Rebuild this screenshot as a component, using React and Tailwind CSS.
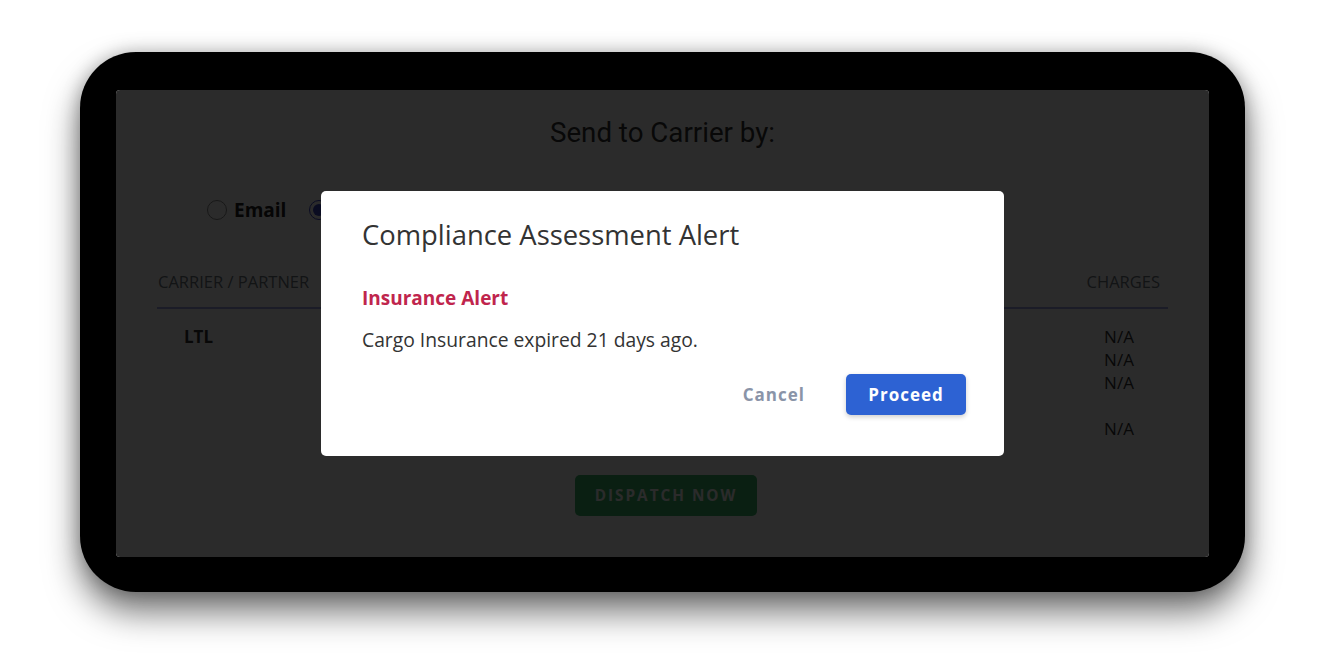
import React from "react";

function Radio({ label, checked }) {
  return (
    <div className="flex items-center gap-[7px] w-[102px] shrink-0">
      <span
        className={
          "w-[20px] h-[20px] rounded-full border-[1.5px] flex items-center justify-center shrink-0 " +
          (checked ? "border-[#3b46c4]" : "border-[#8a8a8a]")
        }
      >
        {checked ? <span className="w-[12px] h-[12px] rounded-full bg-[#3b46c4]" /> : null}
      </span>
      {label ? <span className="text-[19px] leading-[28px] font-bold text-[#222]">{label}</span> : <span className="h-[28px]" />}
    </div>
  );
}

export default function App() {
  return (
    <div
      className="w-[1326px] h-[664px] bg-white pl-[80px] pt-[52px]"
      style={{ fontFamily: '"Open Sans", "Noto Sans", sans-serif' }}
    >
      <div className="w-[1165px] h-[540px] rounded-[56px] bg-black pt-[38px] pb-[35px] px-[36px] shadow-[0_20px_34px_rgba(0,0,0,0.55),0_0_18px_rgba(0,0,0,0.25)]">
        <div className="relative h-full rounded-[4px] bg-white overflow-hidden">
          {/* underlying page */}
          <div className="flex flex-col pt-[27px] px-[41px]">
            <div
              className="text-center text-[27.7px] leading-[32px] text-[#333]"
              style={{ fontFamily: 'Roboto, "Liberation Sans", sans-serif' }}
            >
              Send to Carrier by:
            </div>
            <div className="mt-[47px] flex pl-[50px]">
              <Radio label="Email" />
              <Radio checked />
            </div>
            <div className="mt-[47px] flex justify-between border-b-2 border-[#9ea3e6] pb-[14px] px-[1px] text-[16.5px] leading-[22px] text-[#6c757d]">
              <span>CARRIER / PARTNER</span>
              <span className="pr-[7px]">CHARGES</span>
            </div>
            <div className="flex justify-between pt-[16px] text-[17px] leading-[23px] text-[#333]">
              <span className="pl-[27px] font-bold">LTL</span>
              <div className="w-[90px] flex flex-col items-center pr-[8px]">
                <span>N/A</span>
                <span>N/A</span>
                <span>N/A</span>
                <span>&nbsp;</span>
                <span>N/A</span>
              </div>
            </div>
            <div className="mt-[35px] flex justify-center pl-[7px]">
              <div className="w-[182px] h-[41px] rounded-[5px] bg-[#3bb66a] flex items-center justify-center text-white text-[15.3px] font-bold tracking-[2px]">
                DISPATCH NOW
              </div>
            </div>
          </div>

          {/* overlay */}
          <div className="absolute inset-0 bg-[rgba(0,0,0,0.83)] flex items-center justify-center">
            <div className="w-[683px] h-[265px] rounded-[5px] bg-white flex flex-col pt-[26px] pl-[41px] pr-[38px]">
              <div className="text-[27.4px] leading-[36px] text-[#333]">Compliance Assessment Alert</div>
              <div className="mt-[32px] text-[19px] leading-[26px] font-bold text-[#c0254d]">Insurance Alert</div>
              <div className="mt-[16px] text-[19.3px] leading-[26px] text-[#333]">Cargo Insurance expired 21 days ago.</div>
              <div className="mt-[21px] flex items-center justify-end gap-[41px]">
                <span className="text-[17px] font-bold tracking-[1px] text-[#8a94a8]">Cancel</span>
                <div className="w-[120px] h-[41px] rounded-[5px] bg-[#2d62d3] flex items-center justify-center text-white text-[17px] font-bold tracking-[1px] shadow-[0_2px_5px_rgba(0,0,0,0.2)]">
                  Proceed
                </div>
              </div>
            </div>
          </div>
        </div>
      </div>
    </div>
  );
}
